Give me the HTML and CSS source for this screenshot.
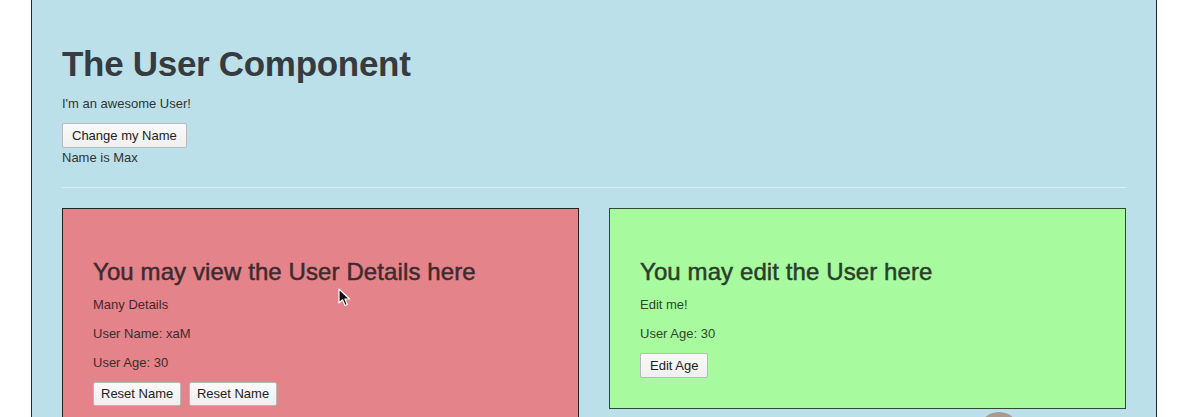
FILE: index.html
```html
<!DOCTYPE html>
<html lang="en">
<head>
    <meta charset="UTF-8">
    <meta name="viewport" content="width=device-width, initial-scale=1.0">
    <title>The User Component</title>
    <link rel="stylesheet" href="styles.css">
</head>
<body>

<div class="panel">
    <h1 class="title">The User Component</h1>
    <p>I'm an awesome User!</p>
    <button class="btn">Change my Name</button>
    <div class="line">Name is Max</div>
    <hr class="divider">

    <div class="row">
        <div class="box box-detail">
            <h3>You may view the User Details here</h3>
            <p>Many Details</p>
            <p>User Name: xaM</p>
            <p>User Age: 30</p>
            <button class="btn">Reset Name</button>
            <button class="btn">Reset Name</button>
        </div>
        <div class="box box-edit">
            <h3>You may edit the User here</h3>
            <p>Edit me!</p>
            <p>User Age: 30</p>
            <button class="btn">Edit Age</button>
        </div>
    </div>
</div>

<div class="blob"></div>

<svg class="cursor" width="14" height="20" viewBox="0 0 14 20">
    <path d="M1 1 L1 15 L4.5 11.8 L7 17.5 L9.3 16.5 L6.9 11 L11.5 11 Z" fill="#111" stroke="#fff" stroke-width="1.2" stroke-linejoin="round"/>
</svg>

</body>
</html>
```

FILE: styles.css
```css
body{
    margin: 0;
    background-color: #fff;
    font-family: "Liberation Sans", Arial, sans-serif;
    font-size: 13px;
    color: #333;
    height: 417px;
    overflow: hidden;
    position: relative;
}
.panel{
    margin-left: 31px;
    width: 1064px;
    padding: 30px 30px 40px 30px;
    background-color: #bce0e9;
    border-left: 1px solid #1f2a30;
    border-right: 1px solid #1f2a30;
}
.title{
    margin: 15px 0 10px 0;
    font-size: 35px;
    line-height: 1.1;
    font-weight: bold;
    letter-spacing: -0.3px;
    color: #353b3e;
}
p{
    margin: 0 0 10px 0;
    line-height: 19px;
}
.line{
    line-height: 19px;
}
.btn{
    font-family: "Liberation Sans", Arial, sans-serif;
    font-size: 13px;
    color: #222;
    height: 25px;
    padding: 0 9px;
    margin: 0;
    background: linear-gradient(#fafafa, #efefef);
    border: 1px solid #b9b9b9;
    border-radius: 2px;
    vertical-align: top;
}
.box .btn{
    height: 24px;
    padding: 0 7px;
}
.box .btn + .btn{
    margin-left: 4px;
}
.box-edit .btn{
    height: 25px;
    padding: 0 9px;
}
.divider{
    margin: 20px 0;
    border: 0;
    border-top: 1px solid #dcedf2;
}
.row{
    display: grid;
    grid-template-columns: 1fr 1fr;
    gap: 30px;
    align-items: start;
}
.box{
    padding: 30px;
    border: 1px solid #222;
}
.box h3{
    margin: 20px 0 10px 0;
    font-size: 24px;
    line-height: 1.1;
    font-weight: normal;
    letter-spacing: 0.1px;
    -webkit-text-stroke: 0.5px;
}
.box-detail{
    background-color: #e4838a;
    color: #3f2b2e;
}
.box-detail h3{
    color: #3f2b2e;
}
.box-edit{
    background-color: #a8fa9f;
    border-color: #2f4a30;
    color: #2c4a2b;
}
.box-edit h3{
    color: #2a3f2a;
}
.blob{
    position: absolute;
    left: 978px;
    top: 412px;
    width: 42px;
    height: 42px;
    border-radius: 50%;
    background-color: #a99a90;
}
.cursor{
    position: absolute;
    left: 338px;
    top: 288px;
}
```
